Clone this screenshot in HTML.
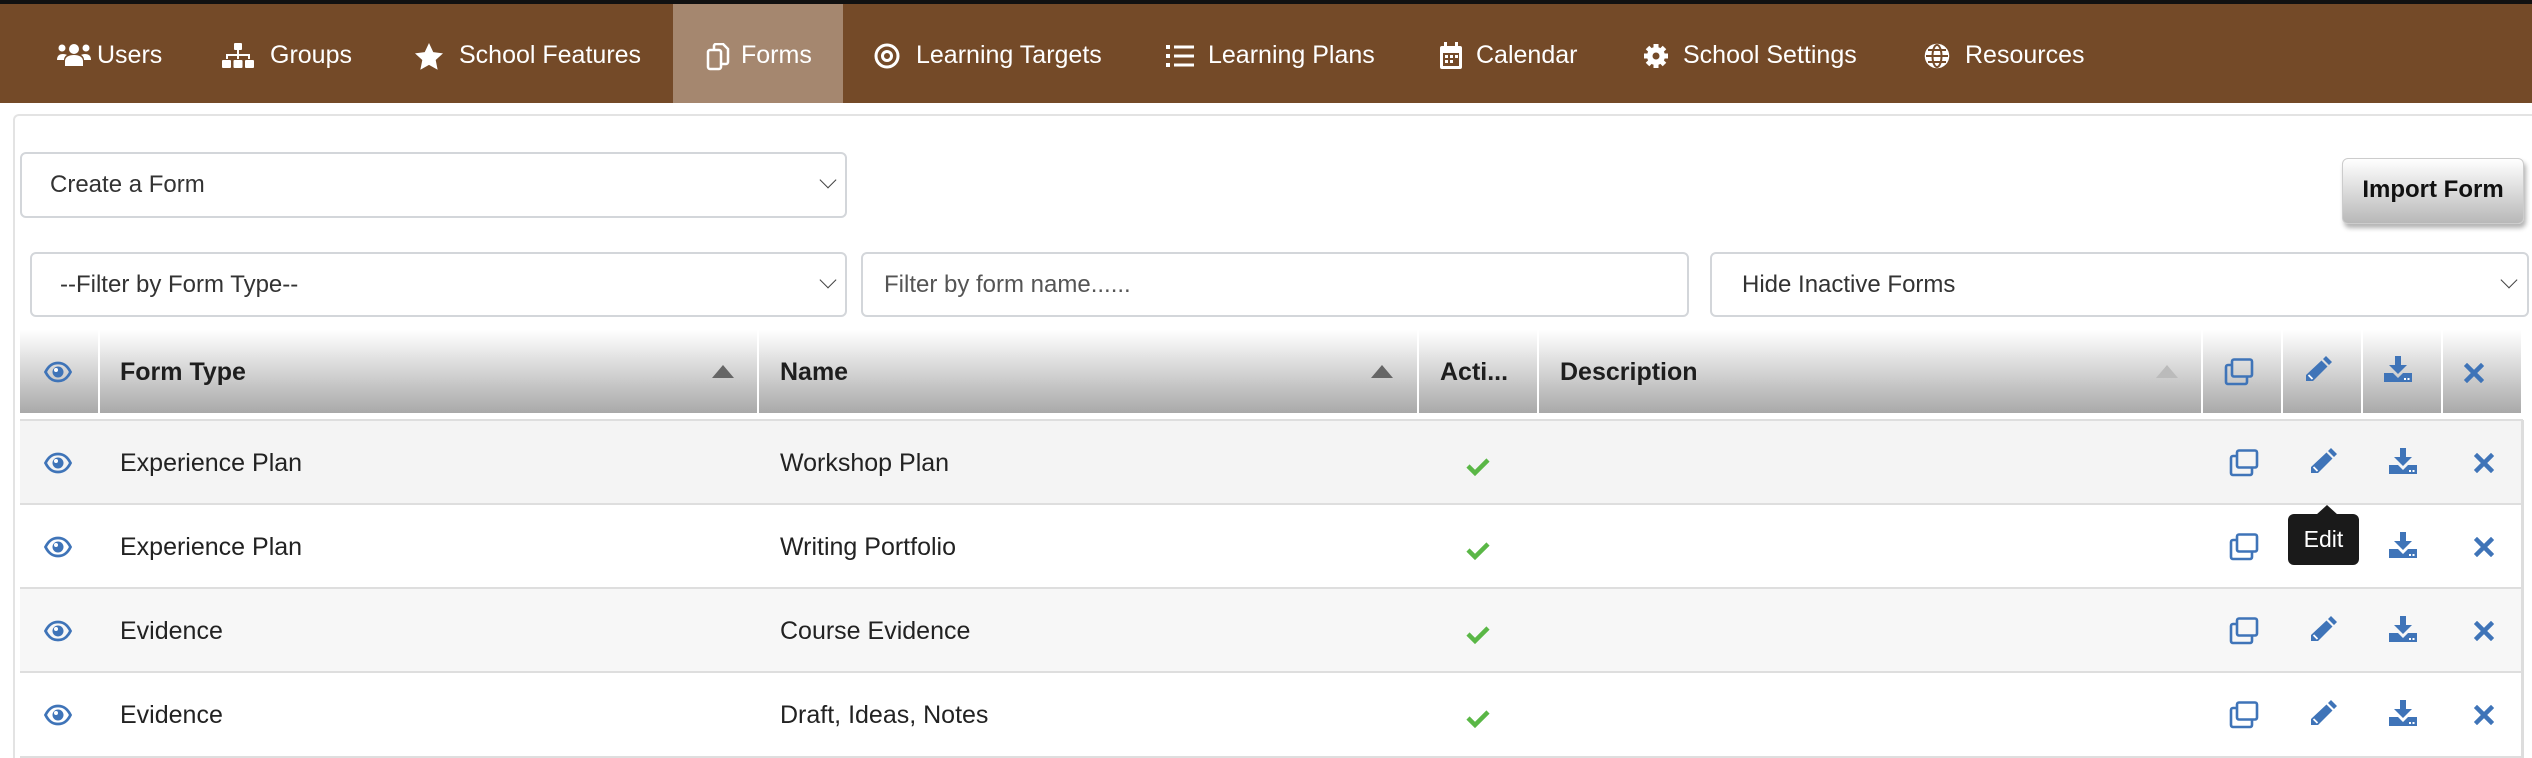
<!DOCTYPE html>
<html><head><meta charset="utf-8"><style>
*{box-sizing:border-box;margin:0;padding:0}
html,body{width:2532px;height:758px;overflow:hidden}
body{background:#fff;font-family:"Liberation Sans",sans-serif;position:relative;color:#222}
.a{position:absolute}
.nav{left:0;top:0;width:2532px;height:103px;background:#744a28;border-top:4px solid #111}
.nt{position:absolute;top:36px;color:#fff;font-size:25px;line-height:30px;white-space:nowrap}
.ni{position:absolute;top:40px}
.box{border:2px solid #d3d6da;border-radius:6px;background:#fff}
.st{position:absolute;font-size:24px;color:#333;line-height:30px}
.chev{position:absolute;width:12px;height:12px;border-right:1.5px solid #444;border-bottom:1.5px solid #444;transform:rotate(45deg)}
.hdr{left:20px;top:330px;width:2503px;height:83px;background:linear-gradient(#fff,#a9a9a9)}
.hs{position:absolute;top:330px;height:83px;width:2px;background:#fff}
.ht{position:absolute;top:357px;font-size:25px;font-weight:bold;color:#1e1e1e;line-height:30px}
.row{position:absolute;left:20px;width:2503px;height:84px;border-bottom:2px solid #dedede}
.ct{position:absolute;font-size:25px;color:#222;line-height:30px}
.tri{position:absolute;width:0;height:0;border-left:11px solid transparent;border-right:11px solid transparent;border-bottom:13px solid #666}
</style></head><body>
<div class="a nav">
<svg class="ni" style="left:56px;top:38px" width="36" height="24" viewBox="0 0 36 24" fill="#fff"><circle cx="18" cy="7" r="5"/><circle cx="6" cy="6" r="3.5"/><circle cx="30" cy="6" r="3.5"/><path d="M9 24v-5c0-4 4-6 9-6s9 2 9 6v5z"/><path d="M1 18c0-4 2-6 6-6 2 0 3 .5 4 1-2 1-3 3-3 5H1zM35 18c0-4-2-6-6-6-2 0-3 .5-4 1 2 1 3 3 3 5z"/></svg>
<div class="nt" style="left:97px">Users</div>
<svg class="ni" style="left:221px;top:39px" width="34" height="26" viewBox="0 0 34 26" fill="#fff"><rect x="13" y="0" width="8" height="7" rx="1"/><path d="M16 7h2v4h11v5h-2v-3H18v3h-2v-3H7v3H5v-5h11z"/><rect x="1" y="17" width="9" height="8" rx="1"/><rect x="12.5" y="17" width="9" height="8" rx="1"/><rect x="24" y="17" width="9" height="8" rx="1"/></svg>
<div class="nt" style="left:270px">Groups</div>
<svg class="ni" style="left:414px;top:39px" width="30" height="28" viewBox="0 0 24 23" fill="#fff"><path d="M12 0l3.5 7.5 8 1-6 5.5 1.6 8L12 18l-7.1 4 1.6-8-6-5.5 8-1z"/></svg>
<div class="nt" style="left:459px">School Features</div>
<div class="a" style="left:673px;top:0;width:170px;height:99px;background:#a5876f"></div>
<svg class="ni" style="left:706px;top:39px" width="24" height="28" viewBox="0 0 24 28" fill="none" stroke="#fff" stroke-width="2.5"><rect x="2" y="7" width="13" height="19" rx="2"/><path d="M8 7V3a2 2 0 012-2h7l5 5v13a2 2 0 01-2 2h-5"/></svg>
<div class="nt" style="left:741px">Forms</div>
<svg class="ni" style="left:874px;top:39px" width="26" height="26" viewBox="0 0 26 26" fill="none" stroke="#fff" stroke-width="3"><circle cx="13" cy="13" r="11"/><circle cx="13" cy="13" r="4.5"/></svg>
<div class="nt" style="left:916px">Learning Targets</div>
<svg class="ni" style="left:1166px;top:41px" width="28" height="22" viewBox="0 0 28 22" fill="#fff"><rect x="0" y="0" width="4" height="4"/><rect x="0" y="9" width="4" height="4"/><rect x="0" y="18" width="4" height="4"/><rect x="8" y="0.5" width="20" height="3"/><rect x="8" y="9.5" width="20" height="3"/><rect x="8" y="18.5" width="20" height="3"/></svg>
<div class="nt" style="left:1208px">Learning Plans</div>
<svg class="ni" style="left:1440px;top:38px" width="22" height="27" viewBox="0 0 22 27" fill="#fff"><rect x="4" y="0" width="3" height="5"/><rect x="15" y="0" width="3" height="5"/><path d="M0 6a2 2 0 012-2h18a2 2 0 012 2v19a2 2 0 01-2 2H2a2 2 0 01-2-2zM3 11v13h16V11z" fill-rule="evenodd"/><rect x="5" y="13" width="3" height="3"/><rect x="10" y="13" width="3" height="3"/><rect x="15" y="13" width="3" height="3"/><rect x="5" y="18" width="3" height="3"/><rect x="10" y="18" width="3" height="3"/></svg>
<div class="nt" style="left:1476px">Calendar</div>
<svg class="ni" style="left:1643px;top:39px" width="26" height="26" viewBox="0 0 26 26"><g fill="#fff"><circle cx="13" cy="13" r="9"/><g stroke="#fff" stroke-width="5"><path d="M13 1v24M1 13h24M4.5 4.5l17 17M21.5 4.5l-17 17"/></g></g><circle cx="13" cy="13" r="3.5" fill="#744a28"/></svg>
<div class="nt" style="left:1683px">School Settings</div>
<svg class="ni" style="left:1924px;top:39px" width="26" height="26" viewBox="0 0 26 26" fill="none" stroke="#fff" stroke-width="2.5"><circle cx="13" cy="13" r="11" fill="#fff"/><g stroke="#744a28" stroke-width="2"><ellipse cx="13" cy="13" rx="4.5" ry="11"/><path d="M2 13h22M4 7h18M4 19h18"/></g></svg>
<div class="nt" style="left:1965px">Resources</div>
</div>

<div class="a" style="left:13px;top:114px;width:2519px;height:644px;border:2px solid #e3e3e3;border-bottom:none;border-right:none;border-radius:6px 0 0 0"></div>

<div class="a box" style="left:20px;top:152px;width:827px;height:66px"></div>
<div class="st" style="left:50px;top:170px">Create a Form</div>
<div class="chev" style="left:822px;top:174px"></div>

<div class="a" style="left:2342px;top:158px;width:182px;height:66px;border-radius:6px;background:linear-gradient(#fff,#b8b8b8);border:1px solid #ccc;box-shadow:2px 4px 5px rgba(0,0,0,.3)"></div>
<div class="a" style="left:2342px;top:176px;width:182px;text-align:center;font-size:24px;font-weight:bold;color:#111">Import Form</div>

<div class="a box" style="left:30px;top:252px;width:817px;height:65px"></div>
<div class="st" style="left:60px;top:270px">--Filter by Form Type--</div>
<div class="chev" style="left:822px;top:274px"></div>
<div class="a box" style="left:861px;top:252px;width:828px;height:65px"></div>
<div class="st" style="left:884px;top:270px;color:#555">Filter by form name......</div>
<div class="a box" style="left:1710px;top:252px;width:819px;height:65px"></div>
<div class="st" style="left:1742px;top:270px">Hide Inactive Forms</div>
<div class="chev" style="left:2503px;top:274px"></div>

<div class="a hdr"></div>
<div class="hs" style="left:98px"></div><div class="hs" style="left:757px"></div><div class="hs" style="left:1417px"></div><div class="hs" style="left:1537px"></div><div class="hs" style="left:2201px"></div><div class="hs" style="left:2281px"></div><div class="hs" style="left:2361px"></div><div class="hs" style="left:2441px"></div><div class="hs" style="left:2521px"></div>
<div class="ht" style="left:120px">Form Type</div>
<div class="ht" style="left:780px">Name</div>
<div class="ht" style="left:1440px">Acti...</div>
<div class="ht" style="left:1560px">Description</div>
<div class="tri" style="left:712px;top:365px"></div>
<div class="tri" style="left:1371px;top:365px"></div>
<div class="tri" style="left:2156px;top:365px;border-bottom-color:#bbb"></div>

<svg width="0" height="0" style="position:absolute"><defs>
<g id="eye"><path d="M1.5 13C5 6 9 4 14 4s9 2 12.5 9C23 20 19 22 14 22S5 20 1.5 13z" fill="none" stroke="#3f74b8" stroke-width="2.8"/><circle cx="14" cy="13" r="5.5" fill="#3f74b8"/><circle cx="12" cy="11" r="2" fill="#fff"/></g>
<g id="cp" fill="none" stroke="#3f74b8" stroke-width="2.6"><rect x="8" y="1.5" width="20" height="17" rx="2"/><path d="M8 7H4a2 2 0 00-2 2v15a2 2 0 002 2h17a2 2 0 002-2v-5"/></g>
<g id="ed" fill="#3f74b8"><path d="M23 1l6 6-3 3-6-6zM18.5 5.5l6 6L10 26H3l0-6z"/><path d="M5.5 20l4 4" stroke="#fff" stroke-width="1.8"/></g>
<g id="dl" fill="#3f74b8"><rect x="11" y="0" width="6" height="10"/><path d="M5 9h18l-9 9z"/><path d="M0 17h9l5 5 5-5h9v9H0z"/><rect x="20" y="22" width="2" height="2" fill="#fff"/><rect x="23.5" y="22" width="2" height="2" fill="#fff"/></g>
<g id="xx" stroke="#3f74b8" stroke-width="4.5" stroke-linecap="square"><path d="M3 3l14 14M17 3L3 17"/></g>
<g id="ck"><path d="M2 12l7 7L22 6" fill="none" stroke="#5ab746" stroke-width="4.5"/></g>
</defs></svg>
<svg class="a" style="left:44px;top:359px" width="28" height="26" viewBox="0 0 28 26"><use href="#eye"/></svg>
<svg class="a" style="left:2224px;top:358px" width="30" height="28" viewBox="0 0 30 28"><use href="#cp"/></svg>
<svg class="a" style="left:2303px;top:355px" width="30" height="28" viewBox="0 0 30 28"><use href="#ed"/></svg>
<svg class="a" style="left:2384px;top:356px" width="28" height="26" viewBox="0 0 28 26"><use href="#dl"/></svg>
<svg class="a" style="left:2464px;top:363px" width="20" height="20" viewBox="0 0 20 20"><use href="#xx"/></svg>

<div class="row" style="top:419px;height:86px;background:#f4f4f4;border-top:2px solid #dedede"></div>
<div class="row" style="top:505px;background:#fff"></div>
<div class="row" style="top:589px;background:#f7f7f7"></div>
<div class="row" style="top:673px;height:85px;background:#fff"></div>
<div class="a" style="left:2521px;top:420px;width:3px;height:338px;background:#ddd"></div>

<div class="ct" style="left:120px;top:448px">Experience Plan</div><div class="ct" style="left:780px;top:448px">Workshop Plan</div>
<div class="ct" style="left:120px;top:532px">Experience Plan</div><div class="ct" style="left:780px;top:532px">Writing Portfolio</div>
<div class="ct" style="left:120px;top:616px">Evidence</div><div class="ct" style="left:780px;top:616px">Course Evidence</div>
<div class="ct" style="left:120px;top:700px">Evidence</div><div class="ct" style="left:780px;top:700px">Draft, Ideas, Notes</div>

<svg class="a" style="left:44px;top:450px" width="28" height="26" viewBox="0 0 28 26"><use href="#eye"/></svg>
<svg class="a" style="left:44px;top:534px" width="28" height="26" viewBox="0 0 28 26"><use href="#eye"/></svg>
<svg class="a" style="left:44px;top:618px" width="28" height="26" viewBox="0 0 28 26"><use href="#eye"/></svg>
<svg class="a" style="left:44px;top:702px" width="28" height="26" viewBox="0 0 28 26"><use href="#eye"/></svg>

<svg class="a" style="left:1466px;top:454px" width="26" height="24" viewBox="0 0 26 24"><use href="#ck"/></svg>
<svg class="a" style="left:1466px;top:538px" width="26" height="24" viewBox="0 0 26 24"><use href="#ck"/></svg>
<svg class="a" style="left:1466px;top:622px" width="26" height="24" viewBox="0 0 26 24"><use href="#ck"/></svg>
<svg class="a" style="left:1466px;top:706px" width="26" height="24" viewBox="0 0 26 24"><use href="#ck"/></svg>

<svg class="a" style="left:2229px;top:449px" width="30" height="28" viewBox="0 0 30 28"><use href="#cp"/></svg>
<svg class="a" style="left:2308px;top:447px" width="30" height="28" viewBox="0 0 30 28"><use href="#ed"/></svg>
<svg class="a" style="left:2389px;top:448px" width="28" height="26" viewBox="0 0 28 26"><use href="#dl"/></svg>
<svg class="a" style="left:2474px;top:453px" width="20" height="20" viewBox="0 0 20 20"><use href="#xx"/></svg>

<svg class="a" style="left:2229px;top:533px" width="30" height="28" viewBox="0 0 30 28"><use href="#cp"/></svg>
<svg class="a" style="left:2389px;top:532px" width="28" height="26" viewBox="0 0 28 26"><use href="#dl"/></svg>
<svg class="a" style="left:2474px;top:537px" width="20" height="20" viewBox="0 0 20 20"><use href="#xx"/></svg>

<svg class="a" style="left:2229px;top:617px" width="30" height="28" viewBox="0 0 30 28"><use href="#cp"/></svg>
<svg class="a" style="left:2308px;top:615px" width="30" height="28" viewBox="0 0 30 28"><use href="#ed"/></svg>
<svg class="a" style="left:2389px;top:616px" width="28" height="26" viewBox="0 0 28 26"><use href="#dl"/></svg>
<svg class="a" style="left:2474px;top:621px" width="20" height="20" viewBox="0 0 20 20"><use href="#xx"/></svg>

<svg class="a" style="left:2229px;top:701px" width="30" height="28" viewBox="0 0 30 28"><use href="#cp"/></svg>
<svg class="a" style="left:2308px;top:699px" width="30" height="28" viewBox="0 0 30 28"><use href="#ed"/></svg>
<svg class="a" style="left:2389px;top:700px" width="28" height="26" viewBox="0 0 28 26"><use href="#dl"/></svg>
<svg class="a" style="left:2474px;top:705px" width="20" height="20" viewBox="0 0 20 20"><use href="#xx"/></svg>

<div class="a" style="left:2316px;top:505px;width:0;height:0;border-left:11px solid transparent;border-right:11px solid transparent;border-bottom:10px solid #1a1a1a"></div>
<div class="a" style="left:2288px;top:514px;width:71px;height:51px;background:#1a1a1a;border-radius:6px;color:#fff;font-size:23px;line-height:51px;text-align:center">Edit</div>
</body></html>
